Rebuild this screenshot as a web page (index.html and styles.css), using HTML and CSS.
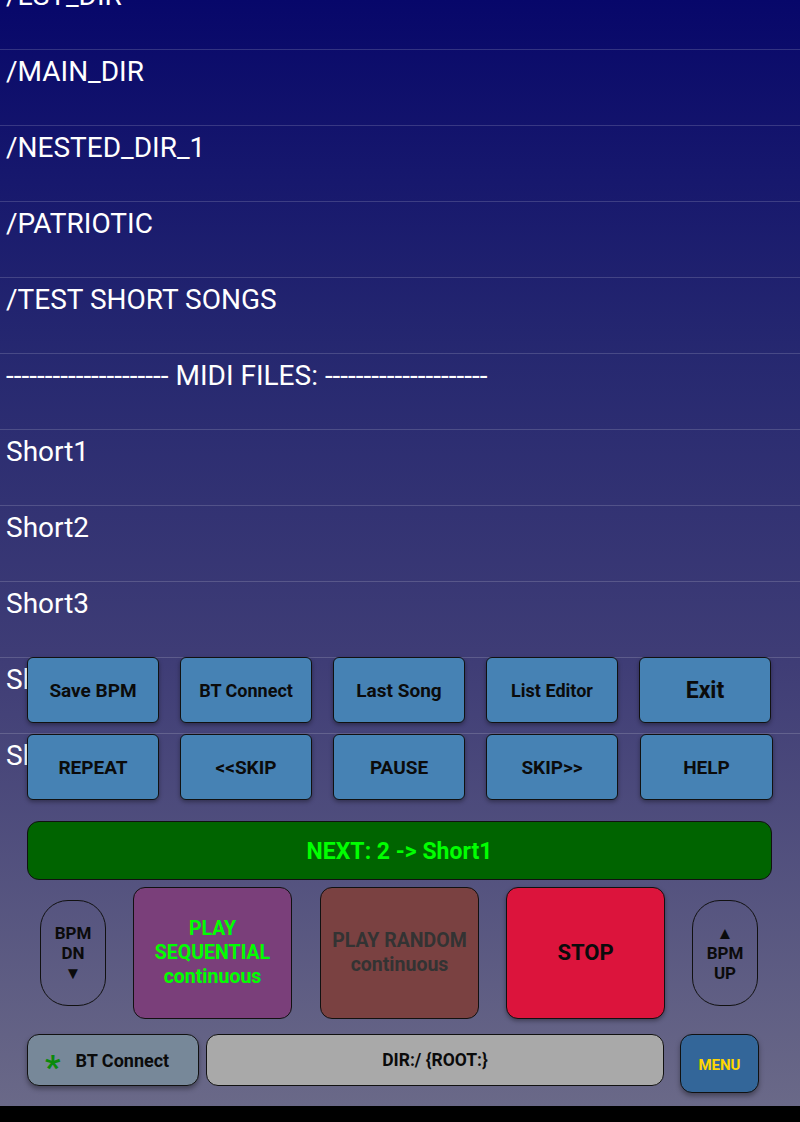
FILE: index.html
```html
<!DOCTYPE html>
<html>
<head>
  <title>Midi Player</title>
  <link rel="stylesheet" href="styles.css">
</head>
<body>
  <div class="screen">
    <!-- Song / directory list -->
    <div class="list">
      <div class="row">/LST_DIR</div>
      <div class="row">/MAIN_DIR</div>
      <div class="row">/NESTED_DIR_1</div>
      <div class="row">/PATRIOTIC</div>
      <div class="row">/TEST SHORT SONGS</div>
      <div class="row">--------------------- MIDI FILES: ---------------------</div>
      <div class="row">Short1</div>
      <div class="row">Short2</div>
      <div class="row">Short3</div>
      <div class="row">Short4</div>
      <div class="row">Short5</div>
    </div>

    <!-- Control panel over the list -->
    <div class="controls">
      <div class="btnGrid">
        <button class="btn">Save BPM</button>
        <button class="btn small">BT Connect</button>
        <button class="btn">Last Song</button>
        <button class="btn small">List Editor</button>
        <button class="btn big">Exit</button>
        <button class="btn">REPEAT</button>
        <button class="btn">&lt;&lt;SKIP</button>
        <button class="btn">PAUSE</button>
        <button class="btn">SKIP&gt;&gt;</button>
        <button class="btn shift">HELP</button>
      </div>

      <div class="nextBar">NEXT: 2 -&gt; Short1</div>

      <div class="playRow">
        <button class="bpm">BPM<br>DN<br><span class="tri">&#9660;</span></button>
        <button class="play seq">PLAY<br>SEQUENTIAL<br>continuous</button>
        <button class="play rnd">PLAY RANDOM<br>continuous</button>
        <button class="play stop">STOP</button>
        <button class="bpm"><span class="tri">&#9650;</span><br>BPM<br>UP</button>
      </div>

      <div class="bottomRow">
        <button class="bt"><span class="star">*</span>BT Connect</button>
        <div class="dir">DIR:/ {ROOT:}</div>
        <button class="menuBtn">MENU</button>
      </div>
    </div>
  </div>
  <div class="navbar"></div>
</body>
</html>
```

FILE: styles.css
```css
body {
  margin: 0;
  background-color: black;
  font-family: Roboto, "Noto Sans", sans-serif;
}

.screen {
  position: relative;
  height: 1106px;
  overflow: hidden;
  background: linear-gradient(to bottom, #07076a 0%, #262870 32%, #3f3d76 60%, #6a6988 100%);
}

/* List */
.list {
  margin-top: -26px;
}

.row {
  height: 76px;
  padding: 6px 6px 0;
  box-sizing: border-box;
  border-bottom: 1px solid rgba(255, 255, 255, 0.16);
  color: white;
  font-size: 28px;
  line-height: 32px;
  white-space: nowrap;
}

.row:last-child {
  border-bottom: none;
}

/* Controls overlay */
.controls {
  position: absolute;
  left: 0;
  right: 0;
  top: 657px;
}

button {
  font-family: Roboto, "Noto Sans", sans-serif;
  cursor: pointer;
}

.btnGrid {
  display: grid;
  grid-template-columns: repeat(5, 132px);
  grid-auto-rows: 66px;
  column-gap: 21px;
  row-gap: 11px;
  margin-left: 27px;
}

.btn {
  background-color: #4682b4;
  border: 1px solid #111;
  border-radius: 6px;
  box-shadow: 0 2px 4px rgba(0, 0, 0, 0.35);
  color: #0b0b0b;
  font-weight: bold;
  font-size: 19px;
  padding: 0;
}

.btn.small {
  font-size: 18px;
}

.btn.big {
  font-size: 23px;
}

.btn.shift {
  margin-left: 1px;
  width: 133px;
}

.nextBar {
  margin: 21px 0 0 27px;
  width: 745px;
  height: 59px;
  box-sizing: border-box;
  padding-top: 2px;
  background-color: #006400;
  border: 1px solid #111;
  border-radius: 12px;
  display: flex;
  align-items: center;
  justify-content: center;
  color: #00ff00;
  font-weight: bold;
  font-size: 23px;
}

.playRow {
  display: flex;
  align-items: center;
  gap: 27px;
  margin: 7px 0 0 40px;
}

.bpm {
  width: 66px;
  height: 106px;
  background: transparent;
  border: 1px solid #111;
  border-radius: 28px;
  color: #0b0b0b;
  font-weight: bold;
  font-size: 17px;
  line-height: 20px;
  padding: 0;
}

.tri {
  font-size: 17px;
}

.play {
  width: 159px;
  height: 132px;
  border: 1px solid #111;
  border-radius: 12px;
  font-weight: bold;
  font-size: 19.5px;
  line-height: 24px;
  padding: 0;
}

.seq {
  background-color: #7a3f7a;
  color: #00ff00;
}

.rnd {
  background-color: #7a4141;
  color: #333;
  margin-left: 1px;
}

.stop {
  background-color: #dc143c;
  color: #0b0b0b;
  font-size: 22px;
  box-shadow: 0 2px 4px rgba(0, 0, 0, 0.35);
}

.bottomRow {
  display: flex;
  align-items: flex-start;
  margin: 15px 0 0 27px;
}

.bt {
  width: 172px;
  height: 52px;
  background-color: #778899;
  border: 1px solid #111;
  border-radius: 12px;
  box-shadow: 0 3px 5px rgba(0, 0, 0, 0.35);
  font-weight: bold;
  font-size: 18px;
  color: #0b0b0b;
  text-align: left;
  padding: 0 0 0 17px;
  display: flex;
  align-items: center;
}

.star {
  color: #0a8a0a;
  font-size: 34px;
  margin-right: 15px;
  position: relative;
  top: 7px;
}

.dir {
  width: 458px;
  height: 52px;
  box-sizing: border-box;
  margin-left: 7px;
  background-color: #a9a9a9;
  border: 1px solid #111;
  border-radius: 12px;
  display: flex;
  align-items: center;
  justify-content: center;
  font-weight: bold;
  font-size: 17.5px;
  color: #0b0b0b;
}

.menuBtn {
  width: 79px;
  height: 59px;
  margin-left: 16px;
  padding: 2px 0 0;
  background-color: #336699;
  border: 1px solid #111;
  border-radius: 12px;
  box-shadow: 0 3px 5px rgba(0, 0, 0, 0.35);
  color: #ffd700;
  font-weight: bold;
  font-size: 15px;
}

.navbar {
  height: 16px;
  background-color: black;
}
```
